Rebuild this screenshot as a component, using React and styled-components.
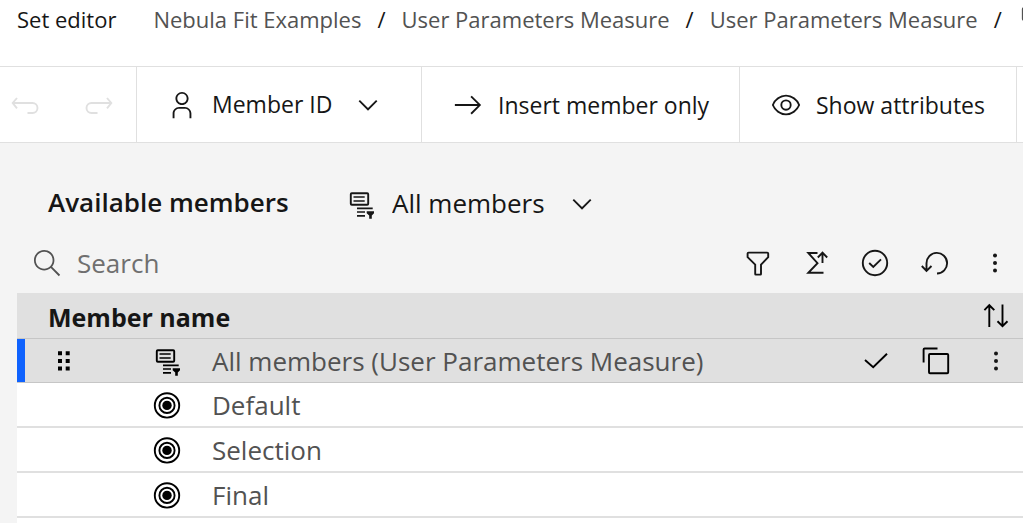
import React from "react";
import styled, { createGlobalStyle } from "styled-components";

const font = `"Open Sans", "Noto Sans", sans-serif`;

const GlobalStyle = createGlobalStyle`
  *, *::before, *::after { box-sizing: border-box; }
  body { margin: 0; background: #ffffff; color: #161616; font-family: ${font}; overflow: hidden; }
  button, input, select { font: inherit; color: inherit; }
`;

const Page = styled.div`
  display: flex;
  flex-direction: column;
  min-height: 100vh;
`;

const Header = styled.header`
  display: flex;
  align-items: flex-start;
  gap: 37px;
  height: 67px;
  padding: 4px 0 0 17px;
  border-bottom: 1px solid #e0e0e0;
  font-size: 22px;
  line-height: 30px;
  white-space: nowrap;
  overflow: hidden;
`;

const PageTitle = styled.h1`
  margin: 0;
  flex: none;
  font-size: 22px;
  line-height: 30px;
  font-weight: 400;
`;

const Crumbs = styled.ol`
  display: flex;
  margin: 0;
  padding: 0;
  list-style: none;
`;

const Crumb = styled.li`
  flex: none;
  &:not(:last-child)::after {
    content: "/";
    margin: 0 16px;
  }
`;

const CrumbLink = styled.a`
  color: #525252;
  text-decoration: none;
`;

const Toolbar = styled.div`
  display: flex;
  height: 76px;
  border-bottom: 1px solid #e0e0e0;
  font-size: 23px;
`;

const History = styled.div`
  display: flex;
  align-items: center;
  gap: 44px;
  flex: 0 0 137px;
  padding-left: 10px;
  border-right: 1px solid #e0e0e0;
`;

const ToolGroup = styled.div`
  display: flex;
  align-items: center;
  gap: 15px;
  flex: 0 0 ${(p) => p.$width}px;
  padding-left: 30px;
  border-right: 1px solid #e0e0e0;
`;

const ToolButton = styled.button`
  display: flex;
  align-items: center;
  gap: 15px;
  flex: 0 0 ${(p) => p.$width}px;
  padding: 0 0 0 31px;
  border: 0;
  border-right: 1px solid #e0e0e0;
  background: none;
  line-height: 32px;
  white-space: nowrap;
`;

const Picker = styled.div`
  display: flex;
  align-items: center;
`;

const PickerSelect = styled.select`
  appearance: none;
  width: ${(p) => p.$width}px;
  padding: 0 0 2px;
  border: 0;
  background: none;
`;

const IconButton = styled.button`
  display: flex;
  padding: 0;
  border: 0;
  background: none;
`;

const Icon = styled.svg`
  display: block;
  flex: none;
  width: 30px;
  height: 30px;
  overflow: visible;
  fill: ${(p) => (p.$line ? "none" : "currentColor")};
  stroke: ${(p) => (p.$line ? "currentColor" : "none")};
  stroke-width: 1.9;
  color: ${(p) => p.$color || "#161616"};
  pointer-events: none;
`;

const Panel = styled.main`
  display: flex;
  flex-direction: column;
  flex: 1;
  padding: 41px 0 0 17px;
  background: #f4f4f4;
`;

const PanelHead = styled.div`
  display: flex;
  align-items: center;
  height: 40px;
  padding-left: 31px;
  font-size: 26px;
`;

const PanelTitle = styled.h2`
  margin: 0;
  flex: 0 0 298px;
  padding-bottom: 4px;
  font-size: 26px;
  line-height: 32px;
  font-weight: 600;
`;

const ViewPicker = styled.div`
  display: flex;
  align-items: center;
  gap: 16px;
`;

const Tools = styled.div`
  display: flex;
  align-items: center;
  height: 69px;
  padding: 18px 13px 10px 15px;
  font-size: 26px;
`;

const SearchLabel = styled.label`
  display: flex;
  align-items: center;
  gap: 15px;
  flex: 1;
`;

const SearchInput = styled.input`
  flex: 1;
  min-width: 0;
  padding: 0;
  border: 0;
  outline: 0;
  background: none;
  &::placeholder { color: #6f6f6f; opacity: 1; }
`;

const Actions = styled.div`
  display: flex;
  justify-content: flex-end;
  gap: 30px;
`;

const List = styled.div`
  flex: 1;
  background: #ffffff;
`;

const Table = styled.table`
  width: 100%;
  table-layout: fixed;
  border-collapse: separate;
  border-spacing: 0;
  font-size: 26px;
  line-height: 32px;
  color: #525252;
`;

const HeadCell = styled.th`
  height: 45px;
  padding: ${(p) => (p.$end ? "0 12px 0 0" : "2px 0 0 31px")};
  background: #e0e0e0;
  color: #161616;
  font-size: 25px;
  font-weight: 700;
  text-align: left;
`;

const Row = styled.tr`
  background: ${(p) => (p.$selected ? "#e0e0e0" : "#ffffff")};
  & > td {
    border-top: ${(p) => (p.$selected ? "1px solid #c6c6c6" : "0")};
    border-bottom: ${(p) => (p.$selected ? "1px solid #c6c6c6" : "2px solid #e0e0e0")};
  }
  & > td:first-child {
    box-shadow: ${(p) => (p.$selected ? "inset 8px 0 0 #0f62fe" : "none")};
  }
`;

const Cell = styled.td`
  height: 45px;
  padding: 0 ${(p) => p.$right || 0}px 0 ${(p) => p.$left || 0}px;
  white-space: nowrap;
`;

const Undo = () => (
  <Icon viewBox="0 0 30 30" $line $color="#e0e0e0"><path d="M7 8 2.7 13 7 18.3M3 13H22.5a4.8 4.8 0 0 1 0 10H17.5" /></Icon>
);
const Redo = () => (
  <Icon viewBox="0 0 30 30" $line $color="#e0e0e0"><path d="M23 8 27.3 13 23 18.3M27 13H7.5a4.8 4.8 0 0 0 0 10H13.5" /></Icon>
);
const User = () => (
  <Icon viewBox="0 0 16 16">
    <path d="M8 2c1.4 0 2.5 1.1 2.5 2.5S9.4 7 8 7 5.5 5.9 5.5 4.5 6.6 2 8 2M8 1C6.1 1 4.5 2.6 4.5 4.5S6.1 8 8 8s3.5-1.6 3.5-3.5S9.9 1 8 1zM13 15h-1v-2.5c0-1.4-1.1-2.5-2.5-2.5h-3C5.1 10 4 11.1 4 12.5V15H3v-2.5C3 10.6 4.6 9 6.5 9h3c1.9 0 3.5 1.6 3.5 3.5V15z" />
  </Icon>
);
const Chevron = () => (
  <Icon viewBox="0 0 16 16"><path d="M8 11 3 6l.7-.7L8 9.6l4.3-4.3.7.7z" /></Icon>
);
const Arrow = () => (
  <Icon viewBox="0 0 16 16"><path d="m9.3 3.7 3.8 3.8H1v1h12.1l-3.8 3.8.7.7 5-5-5-5z" /></Icon>
);
const Eye = () => (
  <Icon viewBox="0 0 32 32">
    <path d="M30.94 15.66A16.69 16.69 0 0 0 16 5 16.69 16.69 0 0 0 1.06 15.66a1 1 0 0 0 0 .68A16.69 16.69 0 0 0 16 27 16.69 16.69 0 0 0 30.94 16.34a1 1 0 0 0 0-.68ZM16 25c-5.3 0-10.9-3.93-12.93-9C5.1 10.93 10.7 7 16 7s10.9 3.93 12.93 9C26.9 21.07 21.3 25 16 25ZM16 10a6 6 0 1 0 6 6 6 6 0 0 0-6-6Zm0 10a4 4 0 1 1 4-4 4 4 0 0 1-4 4Z" />
  </Icon>
);
const SubsetIcon = ({ color }) => (
  <Icon viewBox="0 0 30 30" $line $color={color}>
    <rect x="4.8" y="4.2" width="17.4" height="11.6" rx="1" />
    <path d="M7.5 8H18.7M7.5 12H18.7M11 19.4H26.7M11 23H19M11 26.8H19" strokeWidth="1.7" />
    <path d="M20.7 22.2h7.3v2l-2.2 2.3v3.3h-2.6v-3.3L20.7 24.2z" fill="currentColor" stroke="none" />
  </Icon>
);
const SearchIcon = () => (
  <Icon viewBox="0 0 16 16" $color="#525252">
    <path d="M15 14.3 10.7 10c1.9-2.3 1.6-5.8-.7-7.7S4.2.7 2.3 3 .7 8.8 3 10.7c2 1.7 5 1.7 7 0l4.3 4.3.7-.7zM2 6.5C2 4 4 2 6.5 2S11 4 11 6.5 9 11 6.5 11 2 9 2 6.5z" />
  </Icon>
);
const Filter = () => (
  <Icon viewBox="0 0 30 30" $line>
    <path d="M8.6 4.6h18.6q1 0 1 1v3.6L21 16.6v9.4q0 .6-.6.6h-4.6q-.6 0-.6-.6V16.6L7.6 9.2V5.6q0-1 1-1z" />
  </Icon>
);
const Sigma = () => (
  <Icon viewBox="0 0 30 30" $line>
    <path d="M17.5 5H8.3L17.5 15.2 8.3 24.8H23.5M22.5 15V5M17.8 9.5 22.5 4.7 27.2 9.5" />
  </Icon>
);
const CheckCircle = () => (
  <Icon viewBox="0 0 30 30" $line><circle cx="15" cy="15" r="12.2" /><path d="m9.2 15 4.1 4 7.7-7.7" /></Icon>
);
const Reset = () => (
  <Icon viewBox="0 0 30 30" $line>
    <path d="M17 25.5A10.3 10.3 0 1 0 6.5 15.5V23M1.8 18 6.5 23 11.5 18" />
  </Icon>
);
const Dots = () => (
  <Icon viewBox="0 0 30 30"><circle cx="15" cy="7.5" r="2" /><circle cx="15" cy="15" r="2" /><circle cx="15" cy="22.5" r="2" /></Icon>
);
const Sort = () => (
  <Icon viewBox="0 0 30 30" $line $color="#000000">
    <path d="M8.3 26V4M3.4 9.1 8.3 4.2 13.3 9.1M21.5 3.5V25.5M16.5 20.3 21.5 25.2 26.5 20.3" />
  </Icon>
);
const Check = () => (
  <Icon viewBox="0 0 30 30" $line $color="#000000"><path d="M4 14 12.2 21.2 26 7.7" /></Icon>
);
const Copy = () => (
  <Icon viewBox="0 0 30 30" $line $color="#000000">
    <rect x="8" y="8" width="19.2" height="19.2" rx="1" /><path d="M2.6 16.5V3.5q0-1 1-1H16.5" />
  </Icon>
);
const Handle = () => (
  <Icon viewBox="0 0 30 30" $color="#000000">
    <path d="M9 5.3h4v4H9zM16.7 5.3h4v4h-4zM9 12.9h4v4H9zM16.7 12.9h4v4h-4zM9 20.5h4v4H9zM16.7 20.5h4v4h-4z" />
  </Icon>
);
const Leaf = () => (
  <Icon viewBox="0 0 30 30" $line $color="#000000">
    <circle cx="15" cy="15.4" r="12.2" /><circle cx="15" cy="15.4" r="7.6" />
    <circle cx="15" cy="15.4" r="4.7" fill="currentColor" stroke="none" />
  </Icon>
);

const crumbs = ["Nebula Fit Examples", "User Parameters Measure", "User Parameters Measure"];
const members = ["Default", "Selection", "Final"];

export default function App() {
  return (
    <Page>
      <GlobalStyle />
      <Header>
        <PageTitle>Set editor</PageTitle>
        <nav aria-label="Breadcrumb">
          <Crumbs>
            {crumbs.map((name, i) => (
              <Crumb key={i}><CrumbLink href="#">{name}</CrumbLink></Crumb>
            ))}
            <Crumb>
              <CrumbLink href="#" aria-label="Current set"><SubsetIcon color="#525252" /></CrumbLink>
            </Crumb>
          </Crumbs>
        </nav>
      </Header>
      <Toolbar>
        <History>
          <IconButton aria-label="Undo" disabled><Undo /></IconButton>
          <IconButton aria-label="Redo" disabled><Redo /></IconButton>
        </History>
        <ToolGroup $width={285}>
          <User />
          <Picker>
            <PickerSelect $width={141} aria-label="Display label"><option>Member ID</option></PickerSelect>
            <Chevron />
          </Picker>
        </ToolGroup>
        <ToolButton $width={318}><Arrow />Insert member only</ToolButton>
        <ToolButton $width={277}><Eye />Show attributes</ToolButton>
      </Toolbar>
      <Panel>
        <PanelHead>
          <PanelTitle>Available members</PanelTitle>
          <ViewPicker>
            <SubsetIcon />
            <Picker>
              <PickerSelect $width={175} aria-label="Set"><option>All members</option></PickerSelect>
              <Chevron />
            </Picker>
          </ViewPicker>
        </PanelHead>
        <Tools>
          <SearchLabel>
            <SearchIcon />
            <SearchInput type="search" placeholder="Search" aria-label="Search" />
          </SearchLabel>
          <Actions>
            <IconButton aria-label="Filter"><Filter /></IconButton>
            <IconButton aria-label="Totals"><Sigma /></IconButton>
            <IconButton aria-label="Select all"><CheckCircle /></IconButton>
            <IconButton aria-label="Reset"><Reset /></IconButton>
            <IconButton aria-label="More options"><Dots /></IconButton>
          </Actions>
        </Tools>
        <List>
          <Table>
            <colgroup>
              <col width="120" /><col width="75" /><col /><col width="180" />
            </colgroup>
            <thead>
              <tr>
                <HeadCell colSpan={3} scope="col">Member name</HeadCell>
                <HeadCell $end>
                  <Actions><IconButton aria-label="Sort"><Sort /></IconButton></Actions>
                </HeadCell>
              </tr>
            </thead>
            <tbody>
              <Row $selected>
                <Cell $left={32}><Handle /></Cell>
                <Cell $left={15}><SubsetIcon color="#000000" /></Cell>
                <Cell>All members (User Parameters Measure)</Cell>
                <Cell $right={12}>
                  <Actions>
                    <IconButton aria-label="Insert"><Check /></IconButton>
                    <IconButton aria-label="Copy"><Copy /></IconButton>
                    <IconButton aria-label="More actions"><Dots /></IconButton>
                  </Actions>
                </Cell>
              </Row>
              {members.map((name) => (
                <Row key={name}>
                  <Cell />
                  <Cell $left={15}><Leaf /></Cell>
                  <Cell>{name}</Cell>
                  <Cell />
                </Row>
              ))}
            </tbody>
          </Table>
        </List>
      </Panel>
    </Page>
  );
}
